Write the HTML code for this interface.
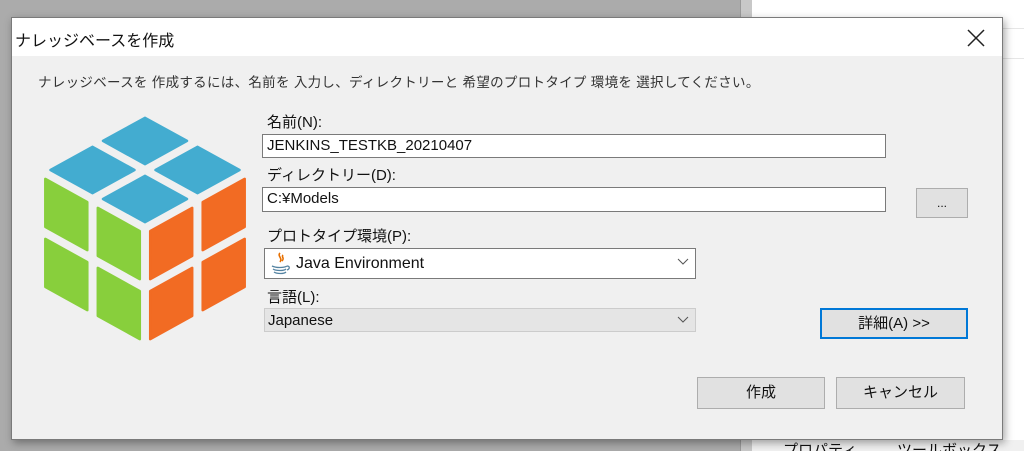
<!DOCTYPE html>
<html><head><meta charset="utf-8"><style>
*{margin:0;padding:0;box-sizing:border-box}
html,body{width:1024px;height:451px;overflow:hidden}
body{position:relative;background:#ababab;font-family:"Liberation Sans","Noto Sans CJK JP",sans-serif;color:#111}
.abs{position:absolute}
.rightbg{left:752px;top:0;width:272px;height:451px;background:#fff}
.vbar{left:740px;top:0;width:12px;height:451px;background:#c8c8c8;border-left:1px solid #999}
.dlg{left:11px;top:17px;width:992px;height:423px;background:#f0f0f0;border:1px solid #7a7a7a;box-shadow:2px 3px 8px rgba(0,0,0,.35)}
.title{left:0;top:0;width:990px;height:38px;background:#fff}
.lbl{font-size:15px;white-space:nowrap}
.inp{background:#fff;border:1px solid #7a7a7a;font-size:15px;padding-left:4px;line-height:21px}
.btn{background:#e1e1e1;border:1px solid #adadad;font-size:15px;text-align:center}
</style></head><body>
<div class="abs rightbg"></div>
<div class="abs" style="left:752px;top:28px;width:272px;height:1px;background:#e6e6e6"></div>
<div class="abs" style="left:752px;top:58px;width:272px;height:1px;background:#e6e6e6"></div>
<div class="abs vbar"></div>
<div class="abs" style="left:752px;top:440px;width:272px;height:11px;background:#f0f0f0"></div>
<div class="abs" style="left:783px;top:439px;font-size:15px">プロパティ</div>
<div class="abs" style="left:897px;top:439px;font-size:15px">ツールボックス</div>
<div class="abs dlg">
 <div class="abs title"></div>
 <div class="abs" style="left:3px;top:9px;font-size:16px">ナレッジベースを作成</div>
 <svg class="abs" style="left:953px;top:9px" width="22" height="22" viewBox="0 0 22 22"><path d="M3 3L19 19M19 3L3 19" stroke="#222" stroke-width="1.5"/></svg>
 <div class="abs" style="left:26px;top:53px;font-size:13.5px;color:#333;letter-spacing:0.3px;white-space:nowrap">ナレッジベースを 作成するには、名前を 入力し、ディレクトリーと 希望のプロトタイプ 環境を 選択してください。</div>
</div>
<svg class="abs" style="left:0;top:0" width="300" height="360" viewBox="0 0 300 360">
<g stroke-linejoin="round" stroke-width="2.5">
<g fill="#43acd0" stroke="#43acd0">
<polygon points="145,117.8 103,140.9 145,164.2 187,140.9"/>
<polygon points="92.5,146.8 50.5,170 92.5,193.2 134.5,170"/>
<polygon points="197.5,146.8 239.5,170 197.5,193.2 155.5,170"/>
<polygon points="145,175.8 103,199 145,222.2 187,199"/>
</g>
<g fill="#88cf3c" stroke="#88cf3c">
<polygon points="45.3,178.9 87.3,202.1 87.3,250.1 45.3,226.9"/>
<polygon points="45.3,238.9 87.3,262.1 87.3,310.1 45.3,286.9"/>
<polygon points="97.8,207.9 139.8,231.1 139.8,279.1 97.8,255.9"/>
<polygon points="97.8,267.9 139.8,291.1 139.8,339.1 97.8,315.9"/>
</g>
<g fill="#f26b23" stroke="#f26b23">
<polygon points="244.7,178.9 202.7,202.1 202.7,250.1 244.7,226.9"/>
<polygon points="244.7,238.9 202.7,262.1 202.7,310.1 244.7,286.9"/>
<polygon points="192.2,207.9 150.2,231.1 150.2,279.1 192.2,255.9"/>
<polygon points="192.2,267.9 150.2,291.1 150.2,339.1 192.2,315.9"/>
</g></g></svg>
<div class="abs lbl" style="left:267px;top:111px">名前(N):</div>
<div class="abs inp" style="left:262px;top:134px;width:624px;height:24px">JENKINS_TESTKB_20210407</div>
<div class="abs lbl" style="left:267px;top:164px">ディレクトリー(D):</div>
<div class="abs inp" style="left:262px;top:187px;width:624px;height:25px">C:¥Models</div>
<div class="abs btn" style="left:916px;top:188px;width:52px;height:30px;line-height:28px;font-size:12px">...</div>
<div class="abs lbl" style="left:267px;top:225px">プロトタイプ環境(P):</div>
<div class="abs" style="left:264px;top:248px;width:432px;height:31px;background:#fff;border:1px solid #7a7a7a"></div>
<svg class="abs" style="left:268px;top:251px" width="24" height="26" viewBox="0 0 24 26"><path d="M12 2c-3 3 3 5 0 9M15 4c-2 2 2 3-1 6" stroke="#e76f00" stroke-width="1.6" fill="none"/><path d="M4 15c4 2 12 2 15 0M5 18c3 2 11 2 13 0M6 21c3 2 10 2 12 0M19 15c3 0 3 3 0 4" stroke="#5382a1" stroke-width="1.3" fill="none"/></svg>
<div class="abs" style="left:296px;top:255px;font-size:16px">Java Environment</div>
<svg class="abs" style="left:677px;top:258px" width="12" height="8"><path d="M1 1L6 6L11 1" stroke="#555" fill="none"/></svg>
<div class="abs lbl" style="left:267px;top:286px">言語(L):</div>
<div class="abs" style="left:264px;top:308px;width:432px;height:24px;background:#e5e5e5;border:1px solid #ccc"></div>
<div class="abs" style="left:268px;top:312px;font-size:15px">Japanese</div>
<svg class="abs" style="left:677px;top:316px" width="12" height="8"><path d="M1 1L6 6L11 1" stroke="#555" fill="none"/></svg>
<div class="abs btn" style="left:820px;top:308px;width:148px;height:31px;line-height:27px;border:2px solid #0078d7">詳細(A) &gt;&gt;</div>
<div class="abs btn" style="left:697px;top:377px;width:128px;height:32px;line-height:30px">作成</div>
<div class="abs btn" style="left:836px;top:377px;width:129px;height:32px;line-height:30px">キャンセル</div>
</body></html>
